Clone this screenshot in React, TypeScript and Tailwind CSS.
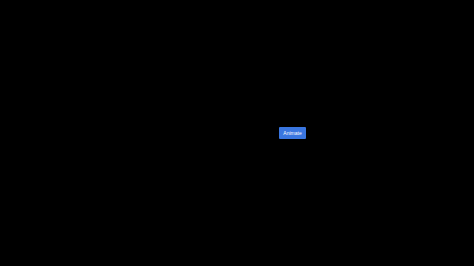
import React from 'react';

export default function App() {
    return (
        <div className="w-[474px] h-[266px] bg-black flex items-center pl-[279px]">
            <button
                type="button"
                className="w-[27px] h-[12px] bg-[#3a76e0] text-white text-[5px] leading-none flex items-center justify-center rounded-[1px] font-['Liberation_Sans',Arial,sans-serif]"
            >
                Animate
            </button>
        </div>
    );
}
